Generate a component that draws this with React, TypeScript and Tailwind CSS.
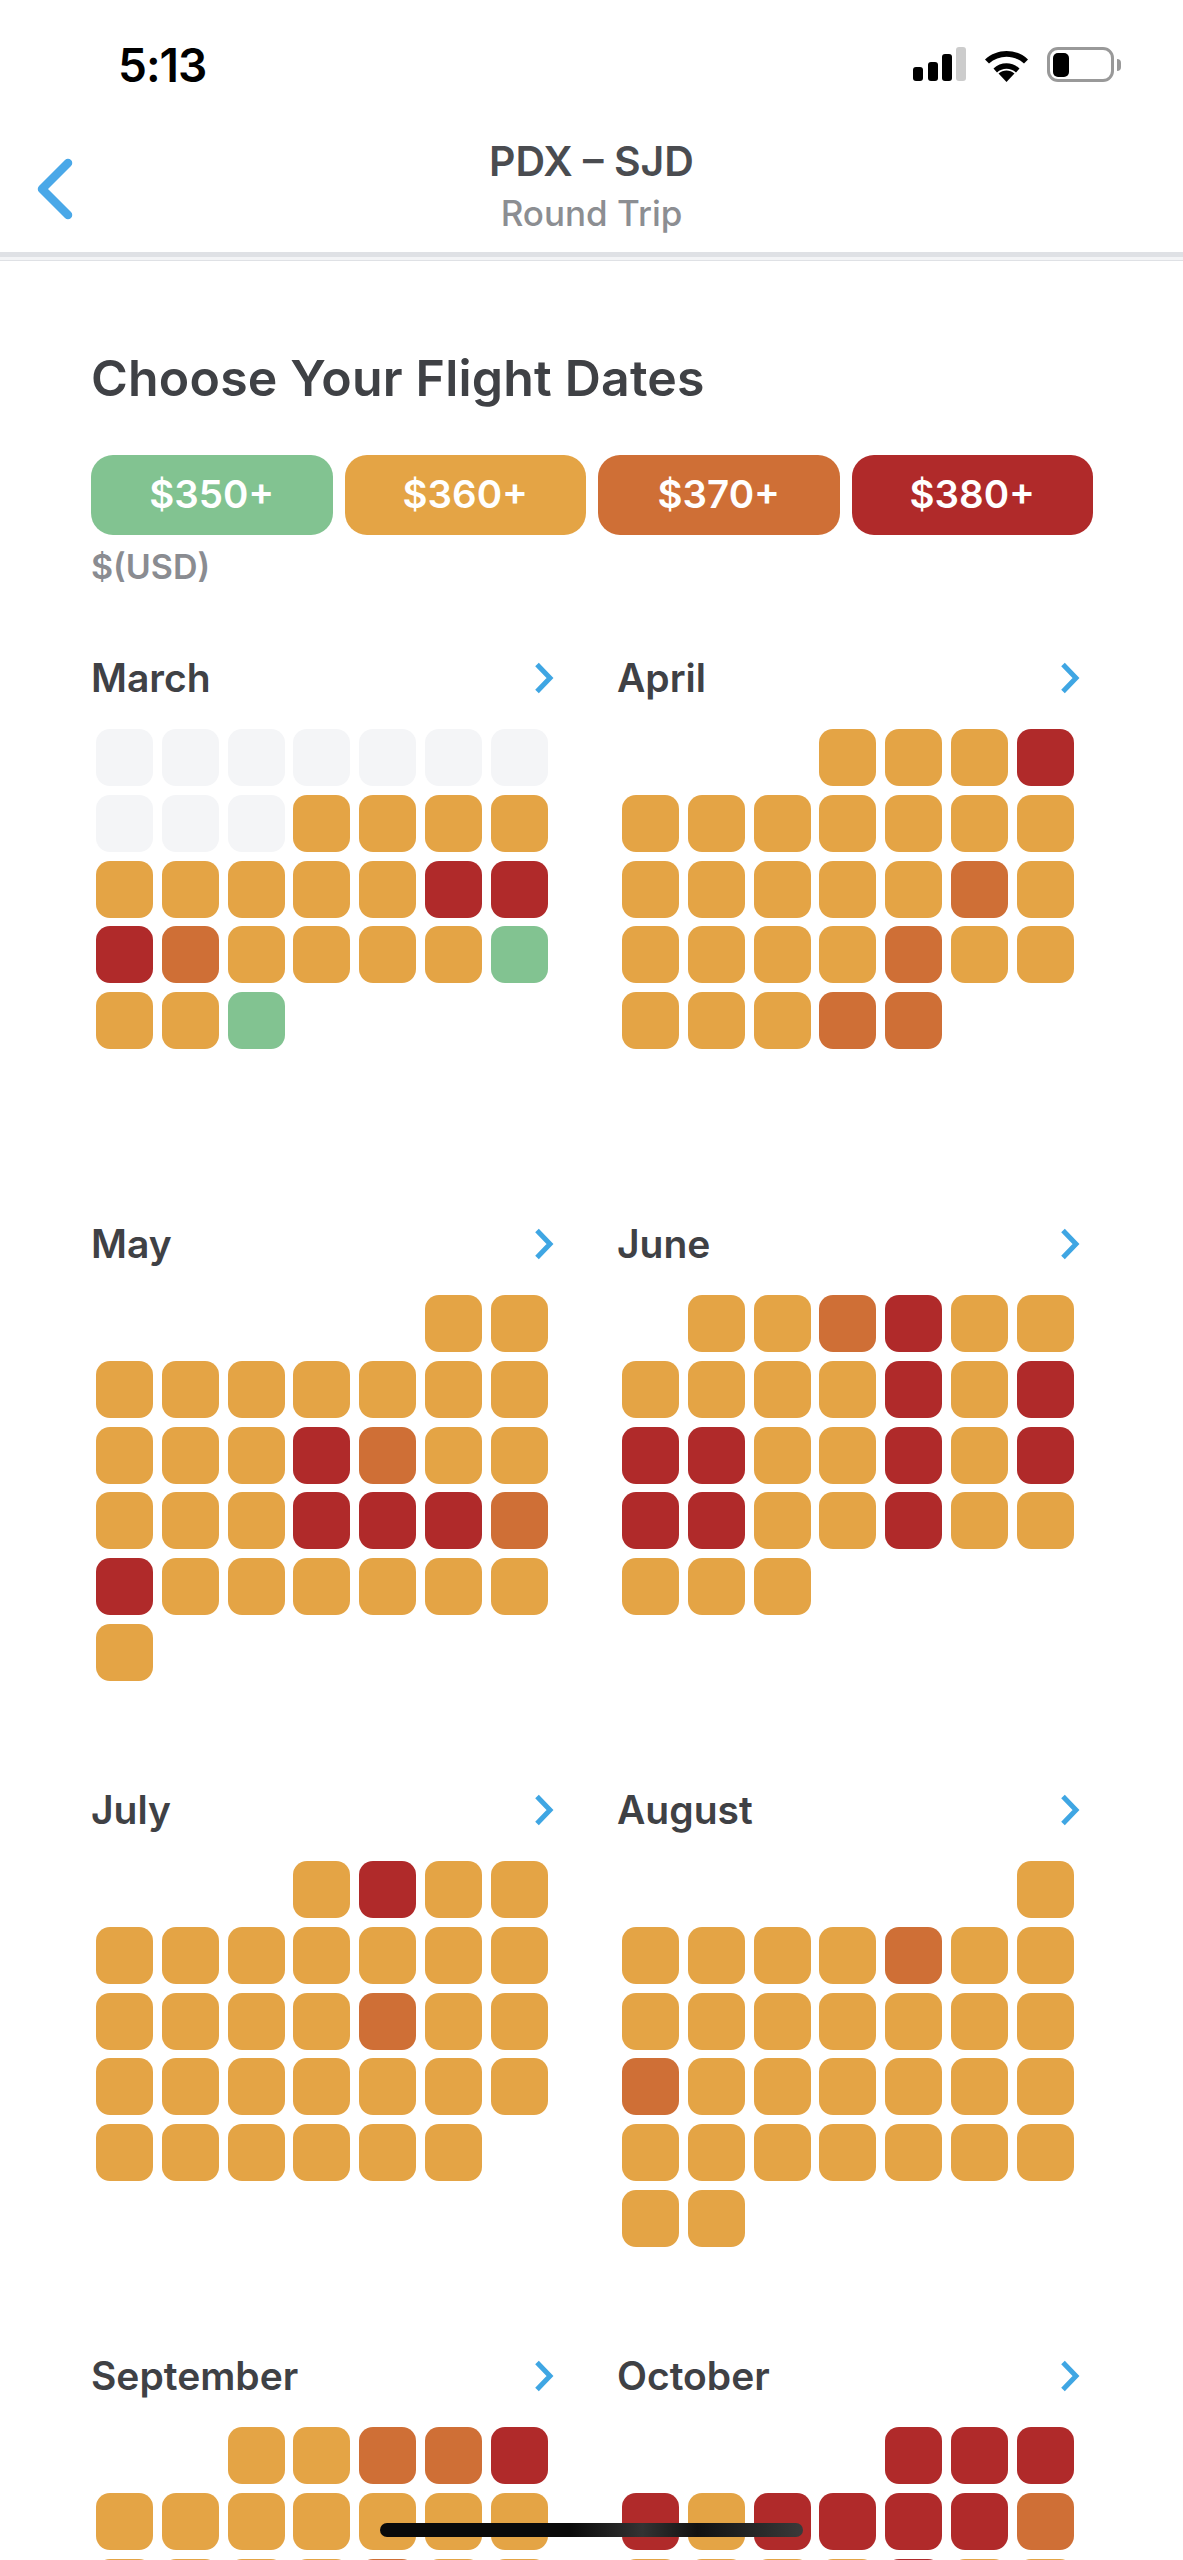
type Cell = "_" | "e" | "g" | "o" | "d" | "r";

const cellColors: Record<Cell, string> = {
  _: "",
  e: "bg-[#f4f5f7]",
  g: "bg-[#82c391]",
  o: "bg-[#e4a445]",
  d: "bg-[#cf6f36]",
  r: "bg-[#b02a2a]",
};

const legend = [
  { label: "$350+", color: "bg-[#82c391]" },
  { label: "$360+", color: "bg-[#e4a445]" },
  { label: "$370+", color: "bg-[#cf6f36]" },
  { label: "$380+", color: "bg-[#b02a2a]" },
];

const months = [
  { name: "March", days: "eeeeeee eeeoooo ooooorr rdoooog oog" },
  { name: "April", days: "___ooor ooooooo oooooDo ooooDoo oooDD" },
  { name: "May", days: "_____oo ooooooo oooRDoo oooRRRD Roooooo o" },
  { name: "June", days: "_ooDRoo ooooRoR RRooRoR RRooRoo ooo" },
  { name: "July", days: "___oRoo ooooooo ooooDoo ooooooo oooooo" },
  { name: "August", days: "______o ooooDoo ooooooo Doooooo ooooooo oo" },
  { name: "September", days: "__ooDDR ooooooo ooooDoo" },
  { name: "October", days: "____RRR RoRRRRD ooooRoo" },
];

function parseDays(days: string): Cell[] {
  return days.replace(/\s/g, "").toLowerCase().split("") as Cell[];
}

function Month({ name, days }: { name: string; days: string }) {
  return (
    <div className="h-[566px]">
      <div className="flex h-[62px] w-[462px] items-center justify-between">
        <span className="mt-[-2px] text-[39px] leading-none font-semibold text-[#3f4145]">{name}</span>
        <svg width="20" height="32" viewBox="0 0 20 32" fill="none" className="mr-[-1px]">
          <path d="M3 2.5 16 16 3 29.5" stroke="#3fa6e3" strokeWidth="5" />
        </svg>
      </div>
      <div className="mt-[20px] ml-[5px] grid grid-cols-[repeat(7,57px)] gap-[8.8px]">
        {parseDays(days).map((c, i) => (
          <div key={i} className={`h-[57px] w-[57px] rounded-[14px] ${cellColors[c]}`} />
        ))}
      </div>
    </div>
  );
}

export default function App() {
  return (
    <div className="relative h-[2560px] w-full overflow-hidden bg-white font-['Inter','Lato',sans-serif]">
      {/* status bar */}
      <div className="flex h-[135px] items-start justify-between pt-[38px] pr-[62px] pl-[118px]">
        <span className="text-[46px] leading-[54px] font-semibold tracking-[-1px] text-black">5:13</span>
        <div className="mt-[9px] flex items-start">
          <svg width="54" height="34" viewBox="0 0 54 34" className="mr-[17px]">
            <rect x="0" y="20" width="10" height="14" rx="3" fill="#000" />
            <rect x="15" y="15" width="10" height="19" rx="3" fill="#000" />
            <rect x="29" y="7" width="10" height="27" rx="3" fill="#000" />
            <rect x="43" y="0" width="10" height="34" rx="3" fill="#cccccc" />
          </svg>
          <svg width="45" height="35" viewBox="0 0 45 35" className="mr-[18px]">
            <path d="M22.5 35 14.5 26.5C19 22.5 26 22.5 30.5 26.5Z" fill="#000" />
            <path d="M9.5 21.5C16.5 14.5 28.5 14.5 35.5 21.5L32 25.5C26.5 20.5 18.5 20.5 13 25.5Z" fill="#000" />
            <path d="M1 12.5C13 1 32 1 44 12.5L40 16.5C30 7.5 15 7.5 5 16.5Z" fill="#000" />
          </svg>
          <div className="flex items-center">
            <div className="flex h-[35px] w-[67px] items-center rounded-[11px] border-[3px] border-[#999999] pl-[3px]">
              <div className="h-[24px] w-[16px] rounded-[5px] bg-black" />
            </div>
            <div className="ml-[3px] h-[12px] w-[4px] rounded-r-full bg-[#999999]" />
          </div>
        </div>
      </div>

      {/* nav bar */}
      <div className="relative flex h-[117px] flex-col items-center">
        <div className="absolute top-[22px] left-[36px]">
          <svg width="37" height="64" viewBox="0 0 37 64" fill="none">
            <path d="M32 6 6 32 32 58" stroke="#4aa8e8" strokeWidth="8.5" strokeLinecap="round" strokeLinejoin="round" />
          </svg>
        </div>
        <div className="mt-[3px] text-[41px] leading-[46px] font-semibold text-[#4a4c50]">PDX – SJD</div>
        <div className="mt-[9px] text-[35px] leading-[40px] font-medium text-[#8c8e92]">Round Trip</div>
      </div>

      {/* header divider */}
      <div className="h-[5px] bg-[#dfe1e5]" />
      <div className="h-[4px] border-b border-[#dfe1e5] bg-[#f3f4f6]" />

      <main className="px-[91px]">
        <h1 className="mt-[87px] text-[50px] leading-[60px] font-semibold tracking-[0.2px] text-[#3f4145]">Choose Your Flight Dates</h1>
        <div className="mt-[47px] flex w-[1002px] gap-[12px]">
          {legend.map((l) => (
            <div
              key={l.label}
              className={`flex h-[80px] flex-1 items-center justify-center rounded-[22px] text-[38.5px] font-semibold text-white ${l.color}`}
            >
              {l.label}
            </div>
          ))}
        </div>
        <div className="mt-[12px] text-[34px] leading-[40px] font-semibold text-[#8a8c91]">$(USD)</div>
        <div className="mt-[60px] grid grid-cols-[526px_526px]">
          {months.map((m) => (
            <Month key={m.name} name={m.name} days={m.days} />
          ))}
        </div>
      </main>

      {/* home indicator */}
      <div className="absolute top-[2523px] left-[380px] h-[14px] w-[423px] rounded-full bg-[linear-gradient(90deg,#0a0a0a,#0a0a0a_45%,#333_62%,#111_75%,#3a3a3a_100%)]" />
    </div>
  );
}
